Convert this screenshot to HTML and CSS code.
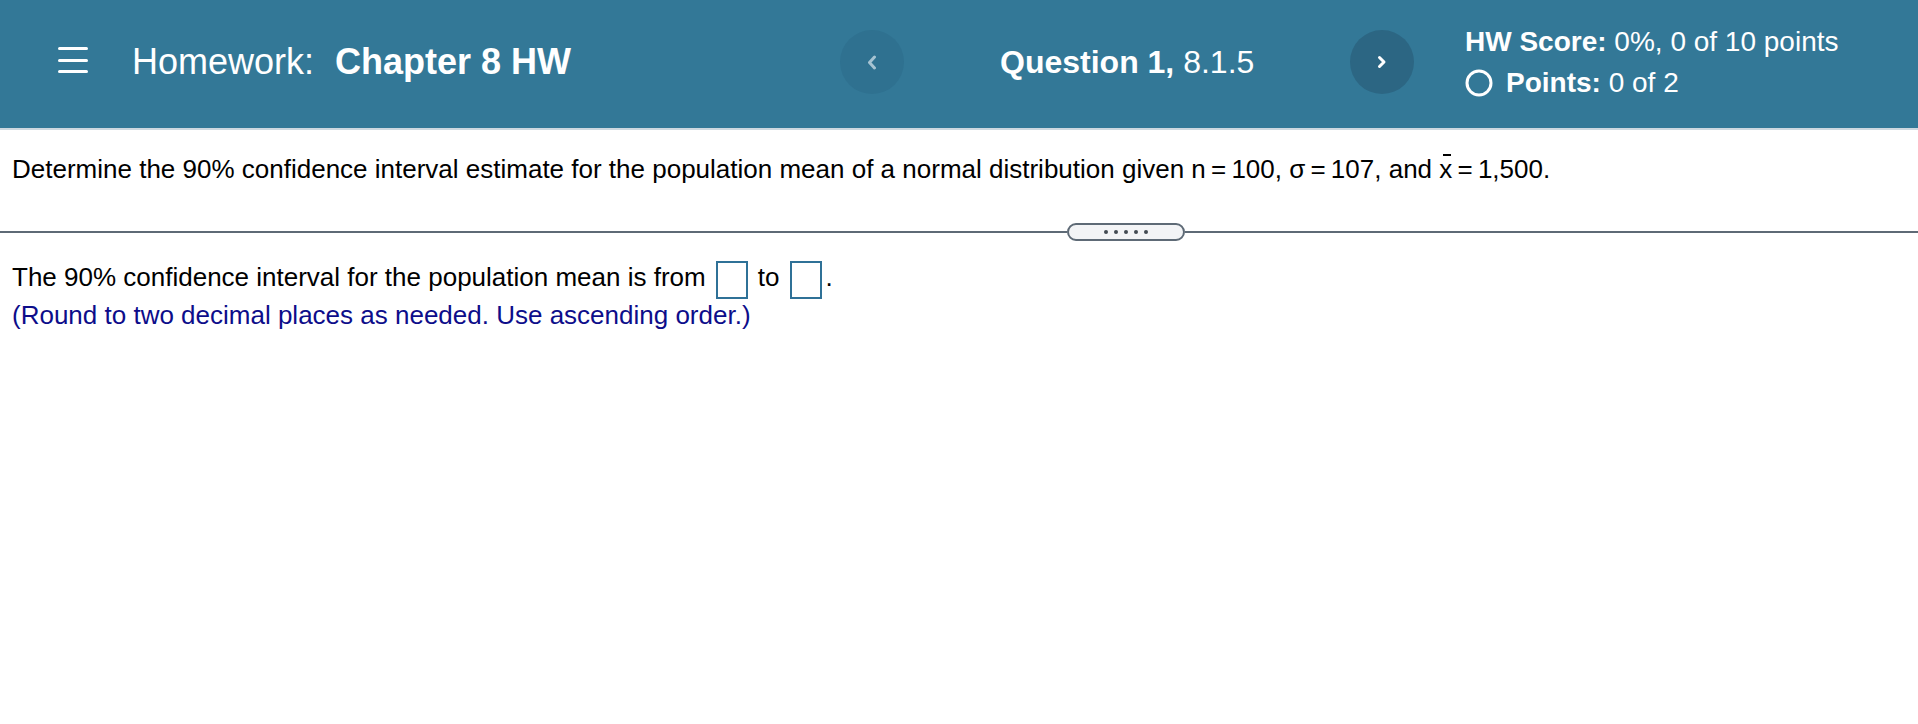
FILE: index.html
```html
<!DOCTYPE html>
<html lang="en">
<head>
    <meta charset="UTF-8">
    <title>Homework: Chapter 8 HW</title>
    <link rel="stylesheet" href="styles.css">
</head>
<body>
    <header class="topbar">
        <button class="menu-btn" aria-label="Menu">
            <span></span><span></span><span></span>
        </button>

        <div class="hw-title">Homework:<b>Chapter 8 HW</b></div>

        <button class="nav-btn prev" aria-label="Previous question">
            <svg width="10" height="15" viewBox="0 0 10 15">
                <polyline points="7.5,2 2.5,7.5 7.5,13" />
            </svg>
        </button>

        <div class="question-title"><b>Question 1,</b> 8.1.5</div>

        <button class="nav-btn next" aria-label="Next question">
            <svg width="10" height="14" viewBox="0 0 10 14">
                <polyline points="2.5,2.5 7,7 2.5,11.5" />
            </svg>
        </button>

        <div class="score">
            <div><b>HW Score:</b> 0%, 0 of 10 points</div>
            <div class="points">
                <svg class="status-ring" width="28" height="28" viewBox="0 0 28 28">
                    <circle cx="14" cy="14" r="12" />
                </svg>
                <b>Points:</b>&nbsp;0 of 2
            </div>
        </div>
    </header>

    <main class="question">
        <p class="prompt">
            Determine the 90% confidence interval estimate for the population mean of a normal distribution given n&#8201;=&#8201;100, <span class="sigma">σ</span>&#8201;=&#8201;107, and <span class="xbar">x</span>&#8201;=&#8201;1,500.
        </p>

        <div class="divider">
            <span class="rule rule-left"></span>
            <button class="expand-pill" aria-label="Show more">
                <i></i><i></i><i></i><i></i><i></i>
            </button>
            <span class="rule rule-right"></span>
        </div>

        <div class="answer">
            <p class="answer-line">The 90% confidence interval for the population mean is from<span class="ans-box first"></span>to<span class="ans-box second"></span>.</p>
            <p class="hint">(Round to two decimal places as needed. Use ascending order.)</p>
        </div>
    </main>
</body>
</html>
```

FILE: styles.css
```css
* {
    margin: 0;
    padding: 0;
    box-sizing: border-box;
}

body {
    background: #ffffff;
    color: #000000;
    font-family: 'Liberation Sans', Arial, Helvetica, sans-serif;
}

button {
    font: inherit;
    border: none;
    background: none;
    color: inherit;
}

/* Barre du haut */
.topbar {
    display: flex;
    align-items: center;
    height: 130px;
    padding: 0 0 4px 58px;
    background: #337897;
    border-bottom: 2px solid #cdd8e0;
    color: #ffffff;
}

.menu-btn {
    display: flex;
    flex-direction: column;
    justify-content: space-between;
    width: 30px;
    height: 26px;
    flex: 0 0 30px;
    margin-top: -4px;
}

.menu-btn span {
    display: block;
    height: 3px;
    border-radius: 2px;
    background: #ffffff;
}

.hw-title {
    flex: 0 0 708px;
    margin-left: 44px;
    font-size: 36px;
    white-space: nowrap;
}

.hw-title b {
    margin-left: 21px;
}

.nav-btn {
    display: flex;
    align-items: center;
    justify-content: center;
    flex: 0 0 64px;
    width: 64px;
    height: 64px;
    border-radius: 50%;
}

.nav-btn svg polyline {
    fill: none;
    stroke-width: 3;
    stroke-linecap: round;
    stroke-linejoin: round;
}

.nav-btn.prev {
    background: #2f7190;
}

.nav-btn.prev polyline {
    stroke: #a6c3d2;
}

.nav-btn.next {
    background: #2c6683;
}

.nav-btn.next polyline {
    stroke: #ffffff;
}

.question-title {
    flex: 0 0 350px;
    margin-left: 96px;
    font-size: 32px;
    white-space: nowrap;
}

.score {
    margin-left: 51px;
    font-size: 28px;
    line-height: 41px;
    white-space: nowrap;
}

.points {
    display: flex;
    align-items: center;
}

.status-ring {
    margin-right: 13px;
}

.status-ring circle {
    fill: none;
    stroke: #ffffff;
    stroke-width: 3;
}

/* Question */
.question {
    font-size: 26px;
    line-height: 38px;
}

.prompt {
    margin-top: 20px;
    padding-left: 12px;
}

.xbar {
    position: relative;
}

.xbar::before {
    content: "";
    position: absolute;
    top: 0;
    left: 4px;
    width: 8px;
    height: 2px;
    background: #000000;
}

/* Séparateur avec bouton */
.divider {
    display: flex;
    align-items: center;
    height: 18px;
    margin-top: 35px;
}

.rule {
    height: 2px;
    background: #5e6a76;
}

.rule-left {
    flex: 0 0 1067px;
}

.rule-right {
    flex: 1;
}

.expand-pill {
    display: flex;
    align-items: center;
    justify-content: center;
    gap: 6px;
    width: 118px;
    height: 18px;
    border: 2px solid #5e6a76;
    border-radius: 9px;
    background: #f3f4f6;
}

.expand-pill i {
    display: block;
    width: 4px;
    height: 4px;
    border-radius: 50%;
    background: #444b53;
}

/* Réponse */
.answer {
    margin-top: 17px;
    padding-left: 12px;
}

.ans-box {
    display: inline-block;
    width: 32px;
    height: 38px;
    border: 2px solid #2f7197;
    vertical-align: -13px;
}

.ans-box.first {
    margin: 0 10px 0 10px;
}

.ans-box.second {
    margin: 0 3px 0 11px;
}

.hint {
    margin-top: -3px;
    color: #0d0d8a;
}
```
